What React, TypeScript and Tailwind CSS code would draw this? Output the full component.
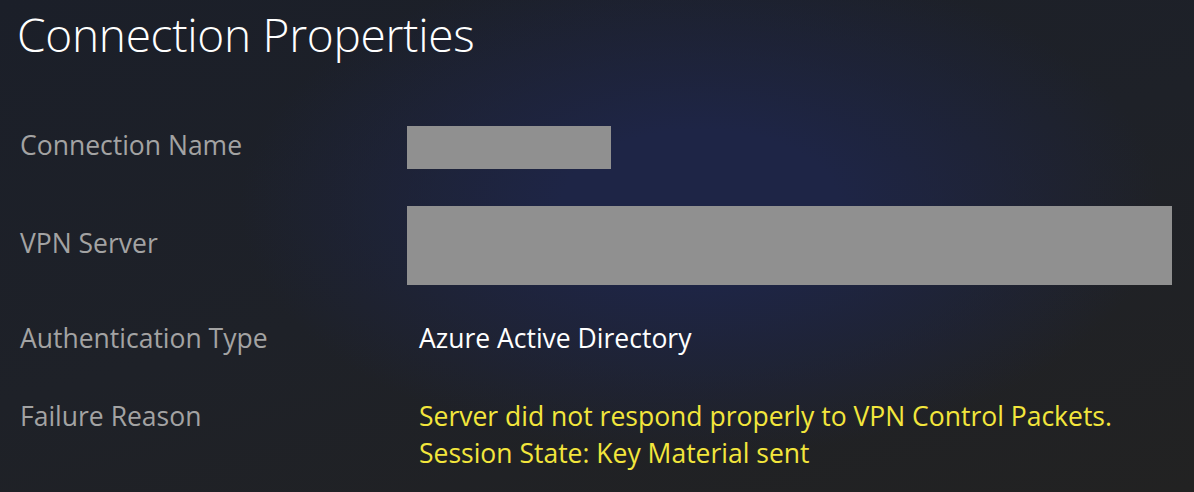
const rows = [
  { label: 'Connection Name' },
  { label: 'VPN Server' },
];

const App = () => {
  return (
    <div
      className="w-[1194px] h-[492px] overflow-hidden text-white"
      style={{ fontFamily: '"Open Sans", "Noto Sans", sans-serif' }}
    >
      <div className="h-full w-full bg-[#212121] bg-[radial-gradient(ellipse_460px_250px_at_700px_205px,#1e2546_0%,#1e2546_30%,rgba(30,37,70,0)_100%),linear-gradient(165deg,#1b1f29_0%,#1e2128_50%,#222222_100%)]">
        <h1 className="pl-[17px] pt-[10px] text-[46px] leading-[48px] font-light tracking-[-0.3px] text-white">
          Connection Properties
        </h1>

        <div className="mt-[68px] flex flex-col text-[26.5px] leading-[37px]">
          <div className="flex items-center h-[43px]">
            <div className="w-[407px] pl-[20px] pb-[5px] text-[#a3a3a3]">{rows[0].label}</div>
            <div className="w-[204px] h-[43px] bg-[#909090]" />
          </div>

          <div className="mt-[37px] flex items-center h-[79px]">
            <div className="w-[407px] pl-[20px] pb-[5px] text-[#a3a3a3]">{rows[1].label}</div>
            <div className="w-[765px] h-[79px] bg-[#909090]" />
          </div>

          <div className="mt-[35px] flex">
            <div className="w-[407px] pl-[20px] text-[#a3a3a3]">Authentication Type</div>
            <div className="pl-[12px] text-white">Azure Active Directory</div>
          </div>

          <div className="mt-[41px] flex">
            <div className="w-[407px] pl-[20px] text-[#a3a3a3]">Failure Reason</div>
            <div className="pl-[12px] text-[#f3e63c]">
              <div>Server did not respond properly to VPN Control Packets.</div>
              <div>Session State: Key Material sent</div>
            </div>
          </div>
        </div>
      </div>
    </div>
  );
};

export default App;
